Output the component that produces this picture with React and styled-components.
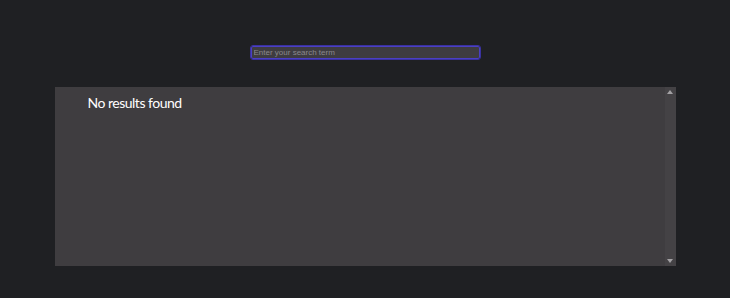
import React from 'react';
import styled, { createGlobalStyle } from 'styled-components';

const GlobalStyle = createGlobalStyle`
  html, body {
    margin: 0;
    padding: 0;
    background-color: #1f2023;
  }
`;

const Page = styled.div`
  display: flex;
  flex-direction: column;
  align-items: center;
  padding-top: 46px;
  height: 298px;
  box-sizing: border-box;
  font-family: Lato, "Open Sans", sans-serif;
`;

const SearchInput = styled.input`
  width: 229px;
  height: 13px;
  box-sizing: border-box;
  padding: 0 2px;
  background-color: #3e3c40;
  border: 1px solid #4b3fc4;
  border-radius: 2px;
  outline: 1px solid #3a32a0;
  color: #ddd;
  font-family: "Liberation Sans", Arial, sans-serif;
  font-size: 8px;

  &::placeholder {
    color: #8a888c;
  }
`;

const Results = styled.div`
  margin-top: 28px;
  width: 621px;
  height: 179px;
  display: flex;
  background-color: #3f3d40;
`;

const List = styled.div`
  flex: 1;
`;

const Message = styled.div`
  padding: 6px 0 0 33px;
  color: #ffffff;
  font-size: 14px;
  letter-spacing: -0.5px;
  line-height: 20px;
`;

const Scrollbar = styled.div`
  width: 11px;
  display: flex;
  flex-direction: column;
  justify-content: space-between;
  align-items: center;
  padding: 3px 0;
  box-sizing: border-box;
  background-color: #444245;
`;

const Arrow = ({ down }) => (
  <svg width="6" height="4" viewBox="0 0 6 4">
    <path d={down ? 'M0 0H6L3 4Z' : 'M0 4H6L3 0Z'} fill="#a3a1a4" />
  </svg>
);

function App() {
  return (
    <>
      <GlobalStyle />
      <Page>
        <SearchInput placeholder="Enter your search term" />
        <Results>
          <List>
            <Message>No results found</Message>
          </List>
          <Scrollbar>
            <Arrow />
            <Arrow down />
          </Scrollbar>
        </Results>
      </Page>
    </>
  );
}

export default App;
